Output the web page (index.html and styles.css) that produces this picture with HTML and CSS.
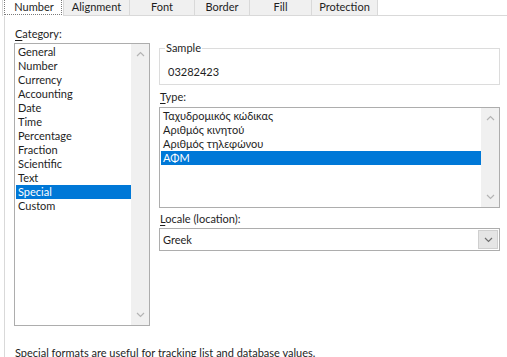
FILE: index.html
```html
<!DOCTYPE html>
<html lang="en">
<head>
    <meta charset="UTF-8">
    <meta name="viewport" content="width=device-width, initial-scale=1.0">
    <title>Format Cells</title>
    <link rel="stylesheet" href="styles.css">
</head>
<body>

    <div class="tabs">
        <div class="tab active"><span class="focus">Number</span></div>
        <div class="tab t-align">Alignment</div>
        <div class="tab t-font">Font</div>
        <div class="tab t-border">Border</div>
        <div class="tab t-fill">Fill</div>
        <div class="tab t-prot">Protection</div>
        <div class="tab-rest"></div>
    </div>

    <div class="panel">
        <div class="columns">

            <div class="left">
                <div class="label"><u>C</u>ategory:</div>
                <div class="listbox cat">
                    <ul class="items">
                        <li>General</li>
                        <li>Number</li>
                        <li>Currency</li>
                        <li>Accounting</li>
                        <li>Date</li>
                        <li>Time</li>
                        <li>Percentage</li>
                        <li>Fraction</li>
                        <li>Scientific</li>
                        <li>Text</li>
                        <li class="selected">Special</li>
                        <li>Custom</li>
                    </ul>
                    <div class="scroll">
                        <svg width="9" height="6" viewBox="0 0 9 6"><path d="M1 5 L4.5 1.5 L8 5" fill="none" stroke="#b4b4b4" stroke-width="1.2"/></svg>
                        <svg width="9" height="6" viewBox="0 0 9 6"><path d="M1 1 L4.5 4.5 L8 1" fill="none" stroke="#b4b4b4" stroke-width="1.2"/></svg>
                    </div>
                </div>
            </div>

            <div class="right">
                <fieldset class="sample">
                    <legend>Sample</legend>
                    <div class="sample-value">03282423</div>
                </fieldset>

                <div class="label type-label"><u>T</u>ype:</div>
                <div class="listbox type">
                    <ul class="items">
                        <li>Ταχυδρομικός κώδικας</li>
                        <li>Αριθμός κινητού</li>
                        <li>Αριθμός τηλεφώνου</li>
                        <li class="selected">ΑΦΜ</li>
                    </ul>
                    <div class="scroll">
                        <svg width="9" height="6" viewBox="0 0 9 6"><path d="M1 5 L4.5 1.5 L8 5" fill="none" stroke="#b4b4b4" stroke-width="1.2"/></svg>
                        <svg width="9" height="6" viewBox="0 0 9 6"><path d="M1 1 L4.5 4.5 L8 1" fill="none" stroke="#b4b4b4" stroke-width="1.2"/></svg>
                    </div>
                </div>

                <div class="label locale-label"><u>L</u>ocale (location):</div>
                <div class="combo">
                    <div class="combo-text">Greek</div>
                    <div class="combo-btn">
                        <svg width="9" height="6" viewBox="0 0 9 6"><path d="M1 1 L4.5 4.5 L8 1" fill="none" stroke="#707070" stroke-width="1.2"/></svg>
                    </div>
                </div>
            </div>

        </div>

        <p class="note">Special formats are useful for tracking list and database values.</p>
    </div>

</body>
</html>
```

FILE: styles.css
```css
*{
    margin: 0;
    padding: 0;
    box-sizing: border-box;
}
body{
    width: 507px;
    height: 357px;
    overflow: hidden;
    background: #ffffff;
    font-family: Lato, "Noto Sans", sans-serif;
    font-size: 11px;
    color: #1e1e1e;
}
u{
    text-decoration: underline;
    text-underline-offset: 2px;
}

/* tabs */
.tabs{
    display: flex;
    height: 16px;
}
.tab{
    background: #f0f0f0;
    border-right: 1px solid #d9d9d9;
    border-bottom: 1px solid #d9d9d9;
    text-align: center;
    line-height: 14px;
}
.tab.active{
    background: #ffffff;
    border: 1px solid #d9d9d9;
    border-top: none;
    border-bottom: none;
    width: 62px;
    margin-left: 2px;
    padding: 0 1px;
}
.tab .focus{
    display: block;
    border: 1px dotted #7a7a7a;
    border-top: none;
    height: 15px;
    padding-left: 2px;
}
.t-align{ width: 66px; }
.t-font{ width: 65px; }
.t-border{ width: 55px; }
.t-fill{ width: 62px; }
.t-prot{ width: 66px; }
.tab-rest{
    flex: 1;
    border-bottom: 1px solid #d9d9d9;
}

/* panel */
.panel{
    margin-left: 4px;
    border-left: 1px solid #d9d9d9;
    height: 341px;
    padding: 11px 0 0 9px;
}
.columns{
    display: flex;
    gap: 9px;
}
.left{
    width: 136px;
}
.right{
    width: 341px;
}
.label{
    height: 16px;
    line-height: 14px;
    padding-left: 1px;
}

/* list boxes */
.listbox{
    display: flex;
    border: 1px solid #adadad;
    background: #ffffff;
}
.listbox.cat{
    height: 283px;
}
.listbox.type{
    height: 101px;
}
.items{
    list-style: none;
    flex: 1;
    padding-top: 1px;
    padding-left: 1px;
}
.items li{
    height: 14px;
    line-height: 14px;
    padding-left: 2px;
    white-space: nowrap;
}
.items li.selected{
    background: #0078d7;
    color: #ffffff;
}
.scroll{
    width: 18px;
    background: #f0f0f0;
    display: flex;
    flex-direction: column;
    justify-content: space-between;
    align-items: center;
    padding: 7px 0 7px;
}
.scroll svg{
    display: block;
}

/* sample */
.sample{
    border: 1px solid #dcdcdc;
    height: 44px;
    margin-top: 14px;
    padding: 0 0 0 8px;
}
.sample legend{
    padding: 0 1px;
    margin-left: -3px;
    line-height: 14px;
}
.sample-value{
    padding-top: 10px;
    line-height: 14px;
}

/* type + locale */
.type-label{
    margin-top: 5px;
    height: 14px;
    margin-bottom: 3px;
}
.locale-label{
    margin-top: 4px;
    height: 14px;
    margin-bottom: 2px;
}
.combo{
    display: flex;
    height: 23px;
    border: 1px solid #adadad;
}
.combo-text{
    flex: 1;
    line-height: 21px;
    padding-left: 3px;
}
.combo-btn{
    width: 20px;
    margin: 1px;
    background: #e5e5e5;
    border: 1px solid #cfcfcf;
    display: flex;
    align-items: center;
    justify-content: center;
}

.note{
    margin-top: 20px;
    padding-left: 1px;
    line-height: 14px;
    white-space: nowrap;
}
```
